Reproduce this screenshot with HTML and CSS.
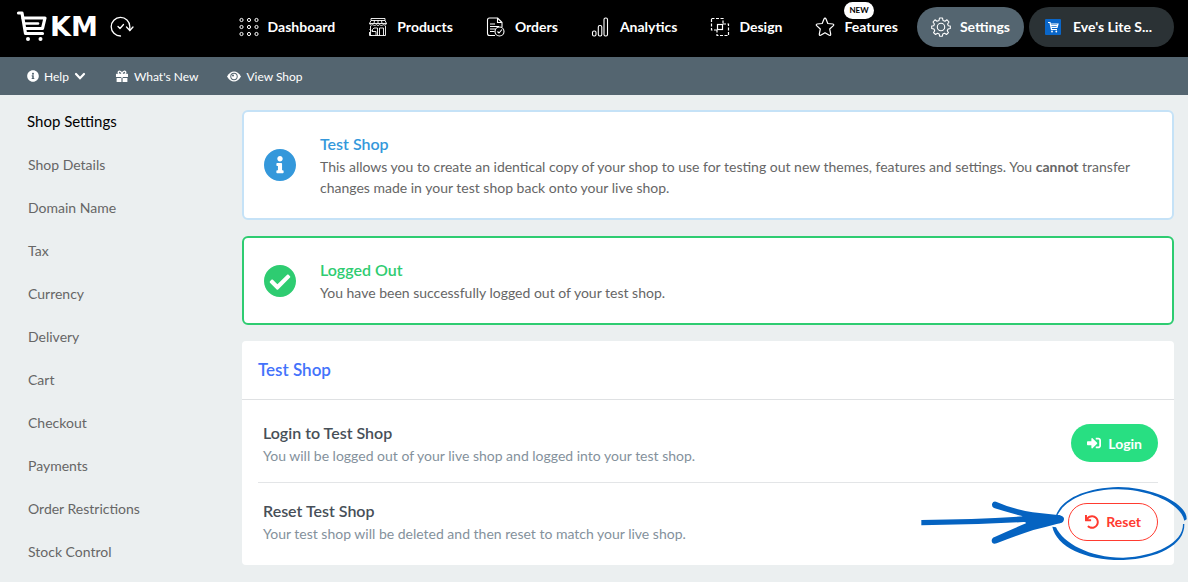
FILE: index.html
```html
<!DOCTYPE html>
<html lang="en">
  <head>
    <meta charset="UTF-8" />
    <meta name="viewport" content="width=device-width, initial-scale=1.0" />
    <title>Test Shop</title>
    <link rel="stylesheet" href="styles.css">
  </head>
  <body>
    <header class="head flex align">
      <a href="#" class="logo flex align">
        <svg class="cart" viewBox="0 0 32 34" fill="none" stroke="#fff" stroke-linecap="round" stroke-linejoin="round">
          <path d="M2.500 3H6L9.500 23.500H26.500" stroke-width="3.200" />
          <path d="M7 8H29L26.500 18.500H9.500" stroke-width="3.200" />
          <path d="M8.500 13.500H22" stroke-width="2.600" />
          <circle cx="12" cy="29" r="2" fill="#fff" stroke="none" />
          <circle cx="24.500" cy="29" r="2" fill="#fff" stroke="none" />
        </svg>
        <span>KM</span>
      </a>
      <svg class="clock" viewBox="0 0 24 22" fill="none" stroke="#fff" stroke-width="1.300" stroke-linecap="round" stroke-linejoin="round">
        <path d="M10.500 20A9.300 9.300 0 1 1 19.800 10.500V14.500" />
        <path d="M16.500 11L19.800 14.500L23 11" />
        <path d="M8 10.500L10 12.500L13.500 8.500" />
      </svg>
      <nav class="nav flex align">
        <a href="#" class="item flex align">
          <svg viewBox="0 0 20 20" fill="none" stroke="#fff">
            <circle cx="2.500" cy="3" r="1.600" /><circle cx="10" cy="3" r="1.600" /><circle cx="17.500" cy="3" r="1.600" />
            <circle cx="2.500" cy="10" r="1.600" /><circle cx="10" cy="10" r="1.600" /><circle cx="17.500" cy="10" r="1.600" />
            <circle cx="2.500" cy="17" r="1.600" /><circle cx="10" cy="17" r="1.600" /><circle cx="17.500" cy="17" r="1.600" />
          </svg>
          Dashboard
        </a>
        <a href="#" class="item flex align">
          <svg viewBox="0 0 20 20" fill="none" stroke="#fff" stroke-width=".9">
            <path d="M3 1.500H17V3.500H3ZM3 3.500L1.500 6.500H18.500L17 3.500M6.500 3.500L6 6.500M10 3.500V6.500M13.500 3.500L14 6.500" />
            <path d="M1.500 6.500a2 2 0 0 0 3.400 1a2 2 0 0 0 3.400 0a2 2 0 0 0 3.400 0a2 2 0 0 0 3.400 0a2 2 0 0 0 3.400-1" />
            <path d="M2.500 9V18.500H17.500V9M11.500 18.500V11H15.500V18.500M4.500 14.500V12.500L6 11H9.500V18.500M1.500 12L4 14.500H8V18.500M1.500 15V18.500H4" />
          </svg>
          Products
        </a>
        <a href="#" class="item flex align">
          <svg viewBox="0 0 20 20" fill="none" stroke="#fff" stroke-width="1.100" stroke-linejoin="round">
            <path d="M9 18.500H3.500Q1.500 18.500 1.500 16.500V3Q1.500 1 3.500 1H11.500L16 5.500V10M11.500 1V5.500H16" />
            <path d="M4 7H9M4 9.500H13M4 12H9.500M4 14.500H8.500" />
            <circle cx="13.500" cy="14.500" r="4.500" />
            <path d="M11.500 14.500L13 16L16 12.500" />
          </svg>
          Orders
        </a>
        <a href="#" class="item flex align">
          <svg viewBox="0 0 20 20" fill="none" stroke="#fff" stroke-width="1.100">
            <rect x="1.500" y="14" width="3.500" height="5" rx="1.500" />
            <rect x="7.300" y="8.500" width="3.500" height="10.500" rx="1.500" />
            <rect x="13" y="1" width="3.500" height="18" rx="1.500" />
          </svg>
          Analytics
        </a>
        <a href="#" class="item flex align">
          <svg viewBox="0 0 20 20" fill="none" stroke="#fff" stroke-width="1.200">
            <path d="M1.500 1.500H13V7M7 13H1.500V1.500" stroke-dasharray="3 1.500" />
            <path d="M13 7H18.500V18.500H7V13" stroke-dasharray="3 1.500" />
            <rect x="7.500" y="7.500" width="5" height="5" />
          </svg>
          Design
        </a>
        <a href="#" class="item flex align">
          <svg viewBox="0 0 20 20" fill="none" stroke="#fff" stroke-width="1.200" stroke-linejoin="round">
            <path d="M10 1.200Q10.700 1.200 11 2L12.800 6.500L17.900 7Q19.300 7.400 18.400 8.600L14.700 12L15.700 17.200Q15.700 18.800 14.300 18.300L10 15.700L5.700 18.300Q4.300 18.800 4.300 17.200L5.300 12L1.600 8.600Q.7 7.400 2.100 7L7.200 6.500L9 2Q9.300 1.200 10 1.200Z" />
          </svg>
          <span class="features">Features<span class="badge">NEW</span></span>
        </a>
        <a href="#" class="item active flex align">
          <svg viewBox="0 0 20 20" fill="none" stroke="#fff" stroke-width="1.100" stroke-linejoin="round">
            <path d="M8.500 1H11.500L12 3.500L14 4.300L16 2.800L18 5L16.600 7L17.300 8.700L19.300 9V11.500L17 12L16.300 13.700L17.500 15.700L15.500 17.500L13.500 16.300L11.800 17L11.400 19.200H8.600L8.200 17L6.500 16.300L4.500 17.500L2.500 15.700L3.700 13.700L3 12L.7 11.500V9L2.700 8.700L3.400 7L2 5L4 2.800L6 4.300L8 3.500Z" />
            <circle cx="10" cy="10" r="3.700" />
          </svg>
          Settings
        </a>
        <a href="#" class="user flex align">
          <svg viewBox="0 0 16 16">
            <rect width="16" height="16" rx="1" fill="#0a66c8" />
            <path d="M3 3.500H5L6.500 10.500H12M5.500 5H13L12 8.500H6.200M6 6.700H12" fill="none" stroke="#fff" stroke-width="1.200" />
            <circle cx="7" cy="12.500" r=".9" fill="#fff" /><circle cx="11.300" cy="12.500" r=".9" fill="#fff" />
          </svg>
          Eve's Lite S...
        </a>
      </nav>
    </header>

    <div class="bar flex align">
      <button type="button" class="help flex align">
        <svg class="i12" viewBox="0 0 512 512" fill="#fff"><path d="M256 8C119 8 8 119 8 256s111 248 248 248 248-111 248-248S393 8 256 8zm0 110c23 0 42 19 42 42s-19 42-42 42-42-19-42-42 19-42 42-42zm56 254c0 7-5 12-12 12h-88c-7 0-12-5-12-12v-24c0-7 5-12 12-12h12v-64h-12c-7 0-12-5-12-12v-24c0-7 5-12 12-12h64c7 0 12 5 12 12v100h12c7 0 12 5 12 12v24z" /></svg>
        Help
        <svg class="i12" viewBox="0 0 12 12" fill="none" stroke="#fff" stroke-width="2.200" stroke-linecap="round"><path d="M2 4L6 8.200L10 4" /></svg>
      </button>
      <a href="#" class="flex align">
        <svg class="i14" viewBox="0 0 14 14" fill="#fff">
          <path d="M1 4H6V7.500H.5V4.500ZM8 4H13L13.500 4.500V7.500H8ZM1.200 8.500H6V13H1.200ZM8 8.500H12.800V13H8ZM6 4H8V13H6Z" />
          <path d="M7 4C5.500 0 2.500 1 3 3.200L4 4M7 4C8.500 0 11.500 1 11 3.200L10 4" fill="none" stroke="#fff" stroke-width="1.400" />
          <path d="M6 8H8V13H6Z" fill="#546570" /><path d="M6.600 4H7.400V13H6.600Z" />
        </svg>
        What's New
      </a>
      <a href="#" class="flex align">
        <svg class="i14" viewBox="0 0 14 12">
          <path d="M0 6Q3 1 7 1T14 6Q11 11 7 11T0 6Z" fill="#fff" />
          <circle cx="7" cy="6" r="3.700" fill="#546570" />
          <circle cx="7" cy="6" r="2.700" fill="#fff" />
          <circle cx="6" cy="5" r="1" fill="#546570" />
        </svg>
        View Shop
      </a>
    </div>

    <div class="container flex">
      <aside class="side">
        <h2>Shop Settings</h2>
        <ul>
          <li><a href="#">Shop Details</a></li>
          <li><a href="#">Domain Name</a></li>
          <li><a href="#">Tax</a></li>
          <li><a href="#">Currency</a></li>
          <li><a href="#">Delivery</a></li>
          <li><a href="#">Cart</a></li>
          <li><a href="#">Checkout</a></li>
          <li><a href="#">Payments</a></li>
          <li><a href="#">Order Restrictions</a></li>
          <li><a href="#">Stock Control</a></li>
        </ul>
      </aside>

      <main class="main flex column">
        <section class="alert info flex align">
          <svg viewBox="8 8 496 496" fill="#3498db"><path d="M256 8C119 8 8 119 8 256s111 248 248 248 248-111 248-248S393 8 256 8zm0 110c23 0 42 19 42 42s-19 42-42 42-42-19-42-42 19-42 42-42zm56 254c0 7-5 12-12 12h-88c-7 0-12-5-12-12v-24c0-7 5-12 12-12h12v-64h-12c-7 0-12-5-12-12v-24c0-7 5-12 12-12h64c7 0 12 5 12 12v100h12c7 0 12 5 12 12v24z" /></svg>
          <div>
            <h3>Test Shop</h3>
            <p>This allows you to create an identical copy of your shop to use for testing out new themes, features and settings. You <b>cannot</b> transfer changes made in your test shop back onto your live shop.</p>
          </div>
        </section>

        <section class="alert success flex align">
          <svg viewBox="8 8 496 496" fill="#2ecc71"><path d="M504 256c0 137-111 248-248 248S8 393 8 256 119 8 256 8s248 111 248 248zM227.300 387.300l184-184c6.200-6.200 6.200-16.400 0-22.600l-22.600-22.600c-6.200-6.200-16.400-6.200-22.600 0L216 308.100l-70.100-70c-6.200-6.200-16.400-6.200-22.600 0l-22.600 22.600c-6.200 6.200-6.200 16.400 0 22.600l104 104c6.200 6.200 16.400 6.200 22.600 0z" /></svg>
          <div>
            <h3>Logged Out</h3>
            <p>You have been successfully logged out of your test shop.</p>
          </div>
        </section>

        <section class="panel">
          <h2>Test Shop</h2>
          <div class="rows">
            <div class="row flex align space">
              <div class="text">
                <h3>Login to Test Shop</h3>
                <p>You will be logged out of your live shop and logged into your test shop.</p>
              </div>
              <button type="button" class="btn login flex center">
                <svg viewBox="0 0 512 512" fill="#fff"><path d="M416 448h-84c-6.600 0-12-5.400-12-12v-40c0-6.600 5.400-12 12-12h84c17.700 0 32-14.300 32-32V160c0-17.700-14.300-32-32-32h-84c-6.600 0-12-5.400-12-12V76c0-6.600 5.400-12 12-12h84c53 0 96 43 96 96v192c0 53-43 96-96 96zm-47-201L201 79c-15-15-41-4.500-41 17v96H24c-13.300 0-24 10.700-24 24v96c0 13.300 10.700 24 24 24h136v96c0 21.500 26 32 41 17l168-168c9.300-9.400 9.300-24.600 0-34z" /></svg>
                Login
              </button>
            </div>
            <div class="row flex align space">
              <div class="text">
                <h3>Reset Test Shop</h3>
                <p>Your test shop will be deleted and then reset to match your live shop.</p>
              </div>
              <button type="button" class="btn reset flex center">
                <svg viewBox="0 0 512 512" fill="#ff3b30"><path d="M212 224H12c-7 0-12-5-12-12V12C0 5 5 0 12 0h48c7 0 12 5 12 12v78C118 39 184 7.500 258 8c137 1 246.500 111.600 246.200 248.500C504 393.300 393 504 256.300 504c-64 0-122.500-24.300-166.500-64.200-5-4.600-5.300-12.600-.5-17.400l34-34c4.500-4.500 11.700-4.700 16.400-.5C170.800 415.300 211.600 432 256.300 432c97.300 0 176-78.700 176-176 0-97.300-78.700-176-176-176-58.500 0-110.300 28.500-142.300 72.300h98.300c6.600 0 12 5.400 12 12v48c0 6.600-5.400 12-12 12z" /></svg>
                Reset
              </button>
              <!-- hand drawn arrow and ring round the reset button -->
              <svg class="mark" viewBox="45 255 819 231" fill="#0563c1" aria-hidden="true">
                <path d="M64 360Q230 358 372 349L480 346Q493 350 492 358Q491 368 480 370L370 366Q220 375 64 376Z" />
                <path d="M288 305Q340 328 398 337L480 346L484 368Q440 380 400 390Q340 410 290 430Q276 434 275 422Q275 414 284 411Q330 390 378 370L366 348Q320 336 282 324Q275 320 276 312Q279 303 288 305Z" />
                <path d="M466 352C480 300 550 264 655 261C760 262 862 310 860 358L853 362C842 312 755 270 655 268C560 268 488 302 470 352Z" />
                <path d="M457 380C470 442 560 482 670 480C770 476 855 436 853 372L849 372C850 430 765 469 670 473C570 474 490 430 468 382Z" />
              </svg>
            </div>
          </div>
        </section>
      </main>
    </div>
  </body>
</html>
```
FILE: styles.css
```css
* {
  margin: 0;
  padding: 0;
  box-sizing: border-box;
}
body {
  background-color: #ebeff0;
  font-family: Lato, "Liberation Sans", sans-serif;
  font-size: 14px;
  line-height: 21px;
  color: #666;
}
a {
  color: inherit;
  text-decoration: none;
}
button {
  border: none;
  background: none;
  font-family: inherit;
  font-size: inherit;
  color: inherit;
  cursor: pointer;
}
svg {
  flex-shrink: 0;
}
.flex {
  display: flex;
}
.align {
  align-items: center;
}
.center {
  justify-content: center;
  align-items: center;
}
.space {
  justify-content: space-between;
}
.column {
  flex-direction: column;
}

/* top bar */
.head {
  min-height: 57px;
  padding: 0 14px 4px 16px;
  background-color: #000;
  color: #fff;
}
.head .logo {
  gap: 2px;
  font-family: "DejaVu Sans", sans-serif;
  font-size: 27px;
  font-weight: bold;
}
.head .cart {
  width: 32px;
  height: 34px;
}
.head .clock {
  width: 24px;
  height: 22px;
  margin-left: 12px;
}
.head .nav {
  margin-left: auto;
  gap: 5px;
  font-weight: bold;
  white-space: nowrap;
}
.nav .item {
  height: 40px;
  padding: 0 14px;
  gap: 9px;
  border-radius: 20px;
}
.nav .item svg {
  width: 20px;
  height: 20px;
}
.nav .active {
  background-color: #546570;
}
.nav .user {
  height: 40px;
  padding: 0 22px 0 16px;
  gap: 12px;
  border-radius: 20px;
  background-color: #2b3235;
}
.nav .user svg {
  width: 16px;
  height: 16px;
}
.features {
  position: relative;
}
.badge {
  position: absolute;
  left: 0;
  bottom: 18px;
  padding: 0 5px;
  border-radius: 9px;
  background-color: #fff;
  color: #000;
  font-size: 8px;
  line-height: 17px;
}

/* second bar */
.bar {
  min-height: 38px;
  padding: 0 27px;
  gap: 29px;
  background-color: #546570;
  color: #fff;
  font-size: 12px;
}
.bar .flex {
  gap: 5px;
}
.i12 {
  width: 12px;
  height: 12px;
}
.i14 {
  width: 14px;
  height: 13px;
}

.container {
  padding: 15px 14px 15px 0;
}
.side {
  width: 242px;
  flex-shrink: 0;
  padding-left: 27px;
}
.side h2 {
  font-size: 15px;
  font-weight: normal;
  line-height: 23px;
  color: #000;
}
.side ul {
  list-style: none;
  padding: 10px 0 0 1px;
}
.side li {
  line-height: 43px;
}
.main {
  flex: 1;
  gap: 16px;
}

h3 {
  font-size: 16px;
  font-weight: 600;
  line-height: 24px;
}
.alert {
  padding: 20px;
  gap: 24px;
  border: 2px solid;
  border-radius: 6px;
  background-color: #fff;
}
.alert svg {
  width: 32px;
  height: 32px;
}
.info {
  border-color: #c5e2f7;
}
.info h3 {
  color: #3498db;
}
.success {
  border-color: #2ecc71;
}
.success h3 {
  color: #2ecc71;
}

.panel {
  border-radius: 4px;
  background-color: #fff;
}
.panel h2 {
  padding: 18px 16px;
  border-bottom: 1px solid #dfe1e3;
  font-size: 17px;
  font-weight: 600;
  line-height: 22px;
  color: #4372fb;
}
.panel .rows {
  padding: 4px 16px 5px;
}
.row {
  position: relative;
  min-height: 78px;
}
.row + .row {
  border-top: 1px solid #e3e5e7;
}
.row .text {
  padding-left: 5px;
}
.row h3 {
  color: #474f58;
}
.row p {
  color: #84919c;
}
.btn {
  height: 38px;
  padding: 0 16px;
  gap: 7px;
  border-radius: 19px;
  font-weight: bold;
}
.btn svg {
  width: 14px;
  height: 14px;
}
.login {
  background-color: #28df82;
  color: #fff;
}
.reset {
  border: 1px solid #ff3b30;
  color: #ff3b30;
}
.mark {
  position: absolute;
  top: 2px;
  right: -30px;
  width: 273px;
  height: 77px;
  pointer-events: none;
}
```
